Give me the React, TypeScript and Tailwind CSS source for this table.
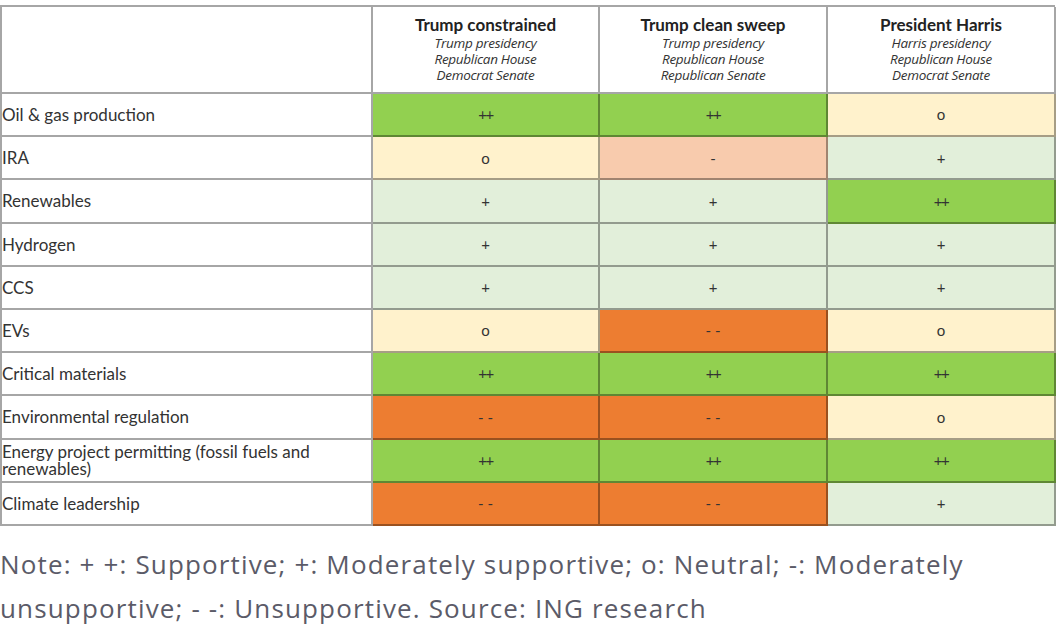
import React from 'react';

type Level = '++' | '+' | 'o' | '-' | '--';

const bg: Record<Level, string> = {
  '++': 'bg-[#92d050]',
  '+': 'bg-[#e2efda]',
  'o': 'bg-[#fff2cc]',
  '-': 'bg-[#f8cbad]',
  '--': 'bg-[#ed7d31]',
};

const label: Record<Level, string> = {
  '++': '++',
  '+': '+',
  'o': 'o',
  '-': '-',
  '--': '- -',
};

const scenarios = [
  { title: 'Trump constrained', lines: ['Trump presidency', 'Republican House', 'Democrat Senate'] },
  { title: 'Trump clean sweep', lines: ['Trump presidency', 'Republican House', 'Republican Senate'] },
  { title: 'President Harris', lines: ['Harris presidency', 'Republican House', 'Democrat Senate'] },
];

const rows: { name: string; values: Level[] }[] = [
  { name: 'Oil & gas production', values: ['++', '++', 'o'] },
  { name: 'IRA', values: ['o', '-', '+'] },
  { name: 'Renewables', values: ['+', '+', '++'] },
  { name: 'Hydrogen', values: ['+', '+', '+'] },
  { name: 'CCS', values: ['+', '+', '+'] },
  { name: 'EVs', values: ['o', '--', 'o'] },
  { name: 'Critical materials', values: ['++', '++', '++'] },
  { name: 'Environmental regulation', values: ['--', '--', 'o'] },
  { name: 'Energy project permitting (fossil fuels and renewables)', values: ['++', '++', '++'] },
  { name: 'Climate leadership', values: ['--', '--', '+'] },
];

export default function App() {
  return (
    <div className="w-[1060px] h-[626px] bg-white overflow-hidden font-['Lato','Open_Sans',sans-serif]">
      <div className="pt-[5px]">
        <div className="grid grid-cols-[371px_227px_228px_228px] w-[1055px] border-l-2 border-t-2 border-black/35">
          <div className="h-[87px] border-r-2 border-b-2 border-black/35 bg-white" />
          {scenarios.map((s) => (
            <div
              key={s.title}
              className="h-[87px] border-r-2 border-b-2 border-black/35 bg-white flex flex-col items-center pt-[8px] text-[#222]"
            >
              <div className="text-[17px] font-bold leading-[20px]">{s.title}</div>
              {s.lines.map((l) => (
                <div key={l} className="text-[13.5px] italic leading-[16px] text-[#333] font-['Open_Sans',sans-serif] tracking-[-0.3px]">
                  {l}
                </div>
              ))}
            </div>
          ))}
          {rows.map((r) => (
            <React.Fragment key={r.name}>
              <div className="h-[43.2px] border-r-2 border-b-2 border-black/35 bg-white flex items-center">
                <span className="text-[17px] leading-[17px] text-[#333] max-w-[320px]">{r.name}</span>
              </div>
              {r.values.map((v, i) => (
                <div
                  key={i}
                  className={`h-[43.2px] border-r-2 border-b-2 border-black/35 ${bg[v]} flex items-center justify-center text-[15px] text-[#333] ${v === '++' ? 'tracking-[-1.5px]' : ''}`}
                >
                  {label[v]}
                </div>
              ))}
            </React.Fragment>
          ))}
        </div>
      </div>
      <p className="mt-[16px] text-[26px] leading-[44px] text-[#5b5b68] tracking-[1.15px] pr-[60px] font-['Open_Sans',sans-serif]">
        Note: + +: Supportive; +: Moderately supportive; o: Neutral; -: Moderately unsupportive; - -: Unsupportive. Source: ING research
      </p>
    </div>
  );
}
